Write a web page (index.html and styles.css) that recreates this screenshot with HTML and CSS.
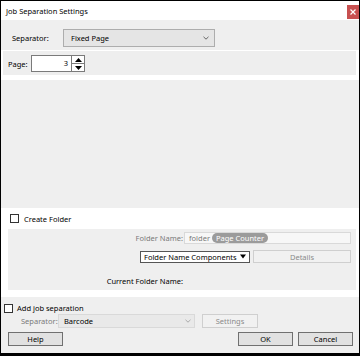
FILE: index.html
```html
<!DOCTYPE html>
<html>
<head>
<meta charset="utf-8">
<link rel="stylesheet" href="styles.css">
</head>
<body>
<div class="window">
  <div class="titlebar">
    <span class="title">Job Separation Settings</span>
    <div class="close"><svg width="6" height="6" viewBox="0 0 6 6"><path d="M0.5 0.5L5.5 5.5M5.5 0.5L0.5 5.5" stroke="#fff" stroke-width="1.2"/></svg></div>
  </div>
  <div class="sep-row">
    <span class="lbl sep-lbl">Separator:</span>
    <div class="combo main-combo"><span>Fixed Page</span><svg class="chev" width="6" height="4" viewBox="0 0 6 4"><path d="M0.5 0.8L3 3.2L5.5 0.8" fill="none" stroke="#666" stroke-width="1"/></svg></div>
  </div>
  <div class="page-wrap">
    <div class="page-panel">
      <span class="lbl">Page:</span>
      <div class="num">3</div>
      <div class="spin">
        <div class="spin-half"><svg width="7" height="4" viewBox="0 0 7 4"><path d="M0 4L3.5 0L7 4Z" fill="#000"/></svg></div>
        <div class="spin-half"><svg width="7" height="4" viewBox="0 0 7 4"><path d="M0 0L3.5 4L7 0Z" fill="#000"/></svg></div>
      </div>
    </div>
  </div>
  <div class="big"></div>
  <div class="check-row create-row">
    <div class="box"></div><span class="lbl">Create Folder</span>
  </div>
  <div class="folder-panel">
    <div class="frow">
      <span class="lbl dis rlbl">Folder Name:</span>
      <div class="fname"><span class="dis">folder</span><span class="pill">Page Counter</span></div>
    </div>
    <div class="frow frow2">
      <div class="comp"><span>Folder Name Components</span><svg width="6" height="5" viewBox="0 0 6 5"><path d="M0 0.5L3 4.5L6 0.5Z" fill="#000"/></svg></div>
      <div class="btn dis-btn details">Details</div>
    </div>
    <div class="frow frow3">
      <span class="lbl rlbl">Current Folder Name:</span>
    </div>
  </div>
  <div class="gap"></div>
  <div class="bottom">
    <div class="check-row add-row">
      <div class="box"></div><span class="lbl">Add job separation</span>
    </div>
    <div class="bsep-row">
      <span class="lbl dis">Separator:</span>
      <div class="combo dis-combo"><span>Barcode</span><svg class="chev" width="6" height="4" viewBox="0 0 6 4"><path d="M0.5 0.8L3 3.2L5.5 0.8" fill="none" stroke="#aaa" stroke-width="1"/></svg></div>
      <div class="btn dis-btn settings">Settings</div>
    </div>
    <div class="btn-row">
      <div class="btn act help">Help</div>
      <div class="spacer"></div>
      <div class="btn act ok">OK</div>
      <div class="btn act cancel">Cancel</div>
    </div>
  </div>
</div>
</body>
</html>
```

FILE: styles.css
```css
html, body {
  margin: 0;
  padding: 0;
  background: #000;
}
body {
  width: 360px;
  height: 356px;
  overflow: hidden;
  font-family: "Noto Sans", "Open Sans", sans-serif;
  font-size: 7.5px;
  color: #000;
}
.window {
  margin: 1px 1px 0 1px;
  width: 358px;
  height: 352px;
  background: #fff;
  display: flex;
  flex-direction: column;
}
.titlebar {
  height: 19px;
  display: flex;
  justify-content: space-between;
  align-items: flex-start;
  background: #fff;
}
.title {
  margin: 5px 0 0 5px;
  line-height: 10px;
}
.close {
  margin-top: 4px;
  width: 12px;
  height: 14px;
  background: #c75050;
  display: flex;
  align-items: center;
  justify-content: center;
}
.lbl { line-height: 10px; white-space: nowrap; flex-shrink: 0; }
.dis { color: #7a7a7a; }
.sep-row {
  height: 30px;
  background: #efefef;
  display: flex;
  align-items: flex-start;
  box-sizing: border-box;
  padding-top: 9px;
}
.sep-lbl { margin: 4px 0 0 11px; width: 51px; }
.combo {
  box-sizing: border-box;
  border: 1px solid #adadad;
  background: #e5e5e5;
  display: flex;
  align-items: center;
  justify-content: space-between;
  line-height: 10px;
  flex-shrink: 0;
}
.main-combo {
  width: 152px;
  height: 18px;
  padding: 0 5px 0 7px;
}
.page-wrap {
  height: 30px;
  box-sizing: border-box;
  padding: 1px 3px 5px 2px;
}
.page-panel {
  height: 24px;
  background: #eeeeee;
  display: flex;
  align-items: flex-start;
  box-sizing: border-box;
  padding: 4px 0 0 5px;
}
.page-panel .lbl { margin-top: 4px; width: 23px; }
.num {
  box-sizing: border-box;
  width: 41px;
  height: 17px;
  background: #fff;
  border: 1px solid #7a7a7a;
  text-align: right;
  padding-right: 3px;
  line-height: 15px;
}
.spin {
  box-sizing: border-box;
  width: 13px;
  height: 17px;
  border: 1px solid #7a7a7a;
  border-left: none;
  display: flex;
  flex-direction: column;
  background: #fff;
}
.spin-half {
  flex: 1;
  display: flex;
  align-items: center;
  justify-content: center;
}
.spin-half + .spin-half { border-top: 1px solid #7a7a7a; }
.big {
  height: 128px;
  background: #efefef;
}
.check-row {
  display: flex;
  align-items: center;
}
.box {
  box-sizing: border-box;
  width: 9px;
  height: 9px;
  border: 1px solid #333;
  background: #fff;
  flex-shrink: 0;
}
.create-row {
  height: 21px;
  padding-left: 9px;
}
.create-row .lbl { margin-left: 5px; }
.folder-panel {
  margin-left: 7px;
  width: 348px;
  height: 61px;
  background: #efefef;
  box-sizing: border-box;
  padding: 3px 5px 0 0;
  display: flex;
  flex-direction: column;
}
.frow {
  display: flex;
  align-items: center;
  height: 12px;
}
.rlbl {
  width: 175px;
  text-align: right;
}
.fname {
  margin-left: 1px;
  flex: 1;
  height: 12px;
  box-sizing: border-box;
  border: 1px solid #d9d9d9;
  background: #f7f7f7;
  display: flex;
  align-items: center;
  padding-left: 4px;
  line-height: 10px;
}
.pill {
  margin-left: 2px;
  background: #9b9b9b;
  color: #fff;
  border-radius: 6px;
  padding: 0 4px;
  line-height: 10px;
}
.frow2 {
  margin-top: 6px;
  height: 13px;
  justify-content: flex-end;
}
.comp {
  box-sizing: border-box;
  width: 110px;
  height: 12px;
  border: 1px solid #555;
  background: #fff;
  line-height: 10px;
  padding: 0 3px 0 3px;
  display: flex;
  justify-content: space-between;
  align-items: center;
  white-space: nowrap;
  flex-shrink: 0;
}
.btn {
  box-sizing: border-box;
  display: flex;
  align-items: center;
  justify-content: center;
  line-height: 10px;
  flex-shrink: 0;
}
.dis-btn {
  border: 1px solid #cfcfcf;
  background: #f1f1f1;
  color: #8a8a8a;
}
.details {
  margin-left: 3px;
  width: 98px;
  height: 13px;
}
.frow3 { margin-top: 12px; }
.gap { height: 7px; }
.bottom {
  height: 56px;
  background: #efefef;
  display: flex;
  flex-direction: column;
}
.add-row {
  height: 14px;
  padding: 4px 0 0 3px;
  align-items: center;
}
.add-row .lbl { margin-left: 4px; }
.bsep-row {
  display: flex;
  align-items: center;
  height: 14px;
  margin-top: -1px;
  padding-left: 20px;
}
.bsep-row .lbl { width: 37px; }
.dis-combo {
  width: 137px;
  height: 14px;
  padding: 0 3px 0 5px;
  border-color: #d9d9d9;
  background: #e9e9e9;
}
.settings {
  margin-left: 7px;
  width: 56px;
  height: 14px;
}
.btn-row {
  display: flex;
  align-items: center;
  margin-top: 4px;
  padding: 0 6px 0 7px;
}
.act {
  height: 14px;
  width: 55px;
  border: 1px solid #707070;
  background: #e1e1e1;
}
.spacer { flex: 1; }
.cancel { margin-left: 5px; }
```
